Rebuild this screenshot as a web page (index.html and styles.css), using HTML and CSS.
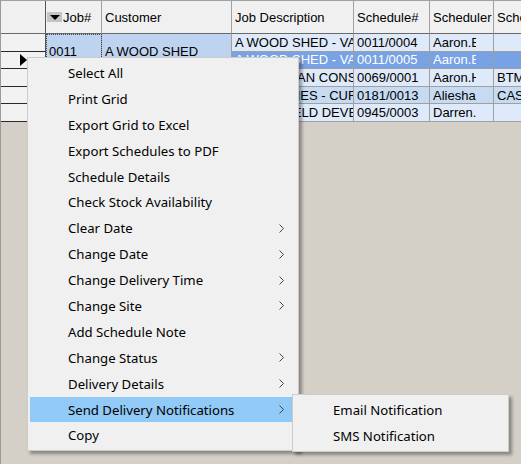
FILE: index.html
```html
<!DOCTYPE html>
<html lang="en">
<head>
    <meta charset="UTF-8">
    <title>Schedules</title>
    <link rel="stylesheet" href="styles.css">
</head>
<body>
    <div class="frame">
        <div class="grid">
            <div class="hd corner"></div>
            <div class="hd"><span class="sort"><span class="tri"></span></span>Job#</div>
            <div class="hd">Customer</div>
            <div class="hd">Job Description</div>
            <div class="hd">Schedule#</div>
            <div class="hd">Scheduler</div>
            <div class="hd">Schedule Date</div>

            <div class="rh"></div>
            <div class="cell merged focus">0011</div>
            <div class="cell merged">A WOOD SHED</div>
            <div class="cell r1">A WOOD SHED - VARSITY LAKES</div>
            <div class="cell r1">0011/0004</div>
            <div class="cell r1"><span class="clip">Aaron.Bennett</span></div>
            <div class="cell r1"></div>

            <div class="rh"><span class="pointer"></span></div>
            <div class="cell sel">A WOOD SHED - VARSITY LAKES</div>
            <div class="cell sel">0011/0005</div>
            <div class="cell sel"><span class="clip">Aaron.Bennett</span></div>
            <div class="cell sel"></div>

            <div class="rh"></div>
            <div class="cell r1">0069</div>
            <div class="cell r1">MCLACHLAN CONSTRUCTION</div>
            <div class="cell r1">MCLACHLAN CONSTRUCTION</div>
            <div class="cell r1">0069/0001</div>
            <div class="cell r1"><span class="clip">Aaron.Hughes</span></div>
            <div class="cell r1">BTM</div>

            <div class="rh"></div>
            <div class="cell r2">0181</div>
            <div class="cell r2">BELL HOMES</div>
            <div class="cell r2">BELL HOMES - CURRUMBIN</div>
            <div class="cell r2">0181/0013</div>
            <div class="cell r2"><span class="clip">Aliesha</span></div>
            <div class="cell r2">CASUAL</div>

            <div class="rh"></div>
            <div class="cell r1">0945</div>
            <div class="cell r1">GREENFIELD DEVELOPMENTS</div>
            <div class="cell r1">GREENFIELD DEVELOPMENTS</div>
            <div class="cell r1">0945/0003</div>
            <div class="cell r1"><span class="clip">Darren.</span></div>
            <div class="cell r1"></div>
        </div>
    </div>

    <div class="menu main-menu">
        <div class="item">Select All</div>
        <div class="item">Print Grid</div>
        <div class="item">Export Grid to Excel</div>
        <div class="item">Export Schedules to PDF</div>
        <div class="item">Schedule Details</div>
        <div class="item">Check Stock Availability</div>
        <div class="item">Clear Date <svg width="5" height="9" viewBox="0 0 5 9"><polyline points="0.5,0.5 4.5,4.5 0.5,8.5" fill="none" stroke="#444" stroke-width="1"/></svg></div>
        <div class="item">Change Date <svg width="5" height="9" viewBox="0 0 5 9"><polyline points="0.5,0.5 4.5,4.5 0.5,8.5" fill="none" stroke="#444" stroke-width="1"/></svg></div>
        <div class="item">Change Delivery Time <svg width="5" height="9" viewBox="0 0 5 9"><polyline points="0.5,0.5 4.5,4.5 0.5,8.5" fill="none" stroke="#444" stroke-width="1"/></svg></div>
        <div class="item">Change Site <svg width="5" height="9" viewBox="0 0 5 9"><polyline points="0.5,0.5 4.5,4.5 0.5,8.5" fill="none" stroke="#444" stroke-width="1"/></svg></div>
        <div class="item">Add Schedule Note</div>
        <div class="item">Change Status <svg width="5" height="9" viewBox="0 0 5 9"><polyline points="0.5,0.5 4.5,4.5 0.5,8.5" fill="none" stroke="#444" stroke-width="1"/></svg></div>
        <div class="item">Delivery Details <svg width="5" height="9" viewBox="0 0 5 9"><polyline points="0.5,0.5 4.5,4.5 0.5,8.5" fill="none" stroke="#444" stroke-width="1"/></svg></div>
        <div class="item active">Send Delivery Notifications <svg width="5" height="9" viewBox="0 0 5 9"><polyline points="0.5,0.5 4.5,4.5 0.5,8.5" fill="none" stroke="#444" stroke-width="1"/></svg></div>
        <div class="item">Copy</div>
    </div>

    <div class="menu sub-menu">
        <div class="item">Email Notification</div>
        <div class="item">SMS Notification</div>
    </div>
</body>
</html>
```

FILE: styles.css
```css
body {
    margin: 0;
    height: 464px;
    overflow: hidden;
    background-color: #d4d0c8;
    font-family: "Liberation Sans", Arial, sans-serif;
    font-size: 13px;
}
.frame {
    height: 464px;
    border-left: 1px solid #9a9a9a;
    overflow: hidden;
}
.grid {
    display: grid;
    grid-template-columns: 45px 56px 130px 122px 76px 64px 80px;
    grid-template-rows: 33px repeat(5, 17.6px);
    width: 573px;
    border-top: 1px solid #a0a0a0;
}
.hd, .cell, .rh {
    box-sizing: border-box;
    border-right: 1px solid #a0a0a0;
    border-bottom: 1px solid #a0a0a0;
    white-space: nowrap;
    overflow: hidden;
    display: flex;
    align-items: center;
    padding: 0 3px;
    color: #000;
}
.hd {
    background-color: #f0f0f0;
    border-bottom-color: #6a6a6a;
    padding-left: 3px;
}
.hd.corner {
    border-right-color: #555;
}
.sort {
    display: inline-flex;
    justify-content: center;
    align-items: center;
    width: 15px;
    height: 10px;
    margin-left: -2px;
    margin-right: 1px;
    background-color: #c4c4c4;
}
.tri {
    width: 0;
    height: 0;
    border-left: 5px solid transparent;
    border-right: 5px solid transparent;
    border-top: 5px solid #000;
}
.rh {
    background-color: #f2f2f2;
    border-right-color: #555;
    border-bottom-color: #2a2a2a;
    justify-content: center;
}
.pointer {
    width: 0;
    height: 0;
    border-top: 6px solid transparent;
    border-bottom: 6px solid transparent;
    border-left: 7px solid #000;
    margin-top: 1px;
}
.cell {
    line-height: 17px;
}
.merged {
    grid-row: span 2;
    background-color: #bdd3ef;
}
.focus {
    outline: 1px dotted #444;
    outline-offset: -1px;
}
.r1 {
    background-color: #dee9f9;
}
.r2 {
    background-color: #c6dbf1;
}
.sel {
    background-color: #78a2e4;
    color: #fff;
}
.clip {
    display: block;
    width: 43px;
    overflow: hidden;
}
.menu {
    position: absolute;
    box-sizing: border-box;
    background-color: #f0f0f0;
    border: 1px solid #cccccc;
    padding: 2px 5px 2px 2px;
    box-shadow: 3px 3px 3px rgba(0, 0, 0, 0.35);
    font-family: "Noto Sans", "Open Sans", sans-serif;
    font-size: 13.2px;
    color: #000;
}
.main-menu {
    left: 27px;
    top: 57px;
    width: 272px;
}
.sub-menu {
    left: 292px;
    top: 394px;
    width: 217px;
}
.item {
    height: 25.9px;
    display: flex;
    align-items: center;
    justify-content: space-between;
    padding: 0 9px 0 38px;
    white-space: nowrap;
}
.active {
    background-color: #91c9f7;
}
```
